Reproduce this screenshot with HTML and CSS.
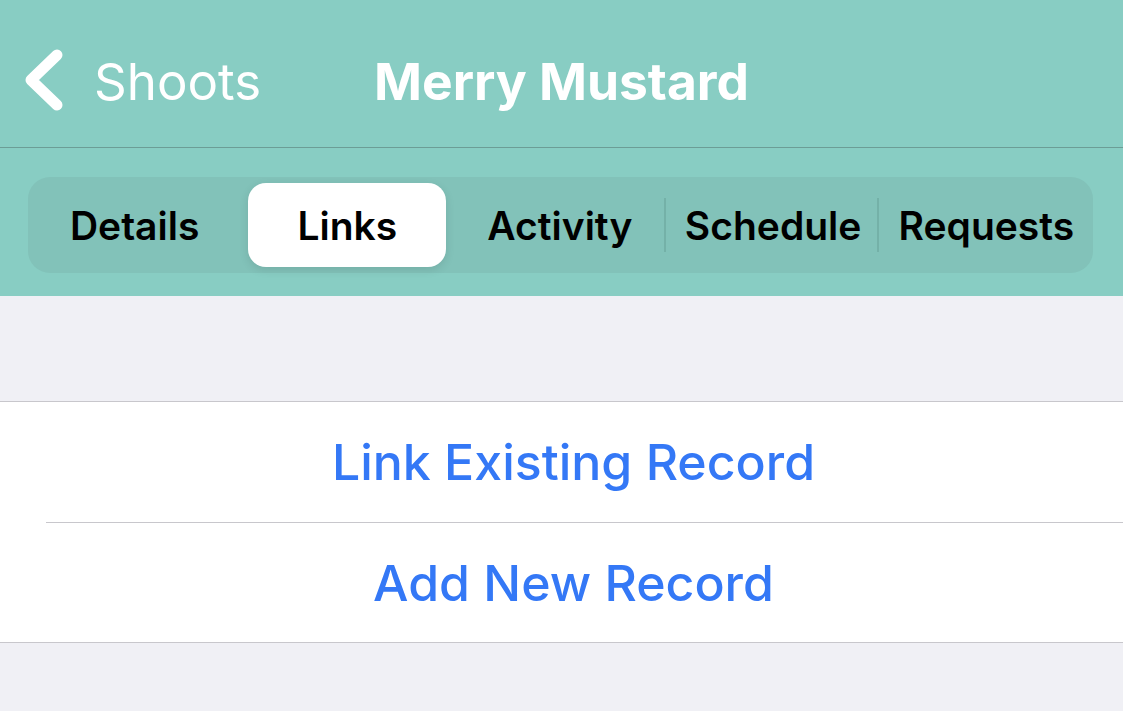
FILE: index.html
```html
<!DOCTYPE html>
<html lang="en">
<head>
  <meta charset="UTF-8" />
  <meta name="viewport" content="width=device-width, initial-scale=1.0"/>
  <title>Merry Mustard</title>
  <link rel="stylesheet" href="styles.css">
</head>
<body>
  <header class="top">
    <!-- Nav bar -->
    <div class="navbar">
      <a class="back" href="#">
        <svg class="chevron" width="40" height="64" viewBox="0 0 40 64">
          <polyline points="32,6 6,31 32,56" fill="none" stroke="#fff" stroke-width="11" stroke-linecap="round" stroke-linejoin="round"/>
        </svg>
        <span>Shoots</span>
      </a>
      <h1 class="title">Merry Mustard</h1>
      <div></div>
    </div>

    <!-- Segmented control -->
    <div class="segbar">
      <div class="segments">
        <div class="seg">Details</div>
        <div class="seg active">Links</div>
        <div class="seg">Activity</div>
        <div class="seg divided">Schedule</div>
        <div class="seg divided">Requests</div>
      </div>
    </div>
  </header>

  <main class="content">
    <div class="group">
      <div class="row">Link Existing Record</div>
      <div class="row">Add New Record</div>
    </div>
  </main>
</body>
</html>
```

FILE: styles.css
```css
* {
  box-sizing: border-box;
}

html, body {
  margin: 0;
  height: 100%;
}

body {
  font-family: Inter, "Noto Sans", sans-serif;
  background: #f0f0f5;
  overflow: hidden;
}

.top {
  background: #88cdc3;
}

.navbar {
  height: 148px;
  border-bottom: 1px solid #6c9d96;
  display: grid;
  grid-template-columns: 1fr auto 1fr;
  align-items: center;
  padding-top: 15px;
}

.back {
  display: flex;
  align-items: center;
  color: #fff;
  text-decoration: none;
  font-size: 51px;
  padding-left: 25px;
}

.back .chevron {
  margin-right: 29px;
}

.title {
  margin: 0;
  color: #fff;
  font-size: 51.5px;
  font-weight: 700;
}

.segbar {
  padding: 29px 30px 23px 28px;
}

.segments {
  display: flex;
  height: 96px;
  padding: 6px 0;
  background: #82c2b9;
  border-radius: 22px;
}

.seg {
  flex: 1;
  display: flex;
  align-items: center;
  justify-content: center;
  font-size: 39px;
  font-weight: 600;
  color: #000;
  white-space: nowrap;
  position: relative;
}

.seg.active {
  background: #fff;
  border-radius: 18px;
  margin: 0 7px;
  flex: 0 0 198px;
  box-shadow: 0 3px 10px rgba(0, 0, 0, 0.1);
}

.seg.divided::before {
  content: "";
  position: absolute;
  left: -3px;
  top: 15px;
  bottom: 15px;
  width: 2px;
  background: #74b1a8;
}

.content {
  padding-top: 105px;
}

.group {
  background: #fff;
  border-top: 1px solid #c8c7cc;
  border-bottom: 1px solid #c8c7cc;
}

.row {
  height: 120px;
  display: flex;
  align-items: center;
  justify-content: center;
  color: #3478f6;
  font-size: 50px;
  font-weight: 500;
  padding-left: 24px;
}

.row + .row {
  border-top: 1px solid #c8c7cc;
  margin-left: 46px;
  padding-left: 0;
  padding-right: 22px;
}
```
